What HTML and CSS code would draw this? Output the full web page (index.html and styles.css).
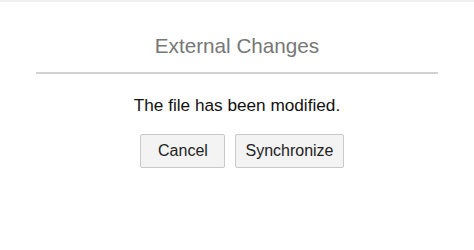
FILE: index.html
```html
<!DOCTYPE html>
<html lang="en">
<head>
    <meta charset="UTF-8">
    <title>External Changes</title>
    <link rel="stylesheet" href="styles.css">
</head>
<body>
    <div class="top-strip"></div>

    <div class="dialog">
        <h2 class="dialog-title">External Changes</h2>
        <div class="divider"></div>
        <p class="message">The file has been modified.</p>

        <!-- Actions -->
        <div class="actions">
            <button class="btn btn-cancel">Cancel</button>
            <button class="btn">Synchronize</button>
        </div>
    </div>
</body>
</html>
```

FILE: styles.css
```css
body {
    margin: 0;
    background-color: #fff;
    font-family: "Liberation Sans", Arial, sans-serif;
    color: #111;
}

.top-strip {
    height: 2px;
    background-color: #f0f0f0;
}

.dialog {
    padding: 32px 36px 0;
}

.dialog-title {
    margin: 0;
    font-size: 20.7px;
    font-weight: normal;
    line-height: 24px;
    color: #777;
    text-align: center;
}

.divider {
    height: 2px;
    margin-top: 14px;
    background-color: #d2d2d2;
}

.message {
    margin: 20px 0 0;
    font-size: 17.2px;
    line-height: 22px;
    text-align: center;
}

.actions {
    display: flex;
    justify-content: center;
    gap: 10px;
    margin-top: 18px;
    padding-left: 10px;
}

.btn {
    height: 34px;
    padding: 0 9px;
    border: 1px solid #c9c9c9;
    border-radius: 2px;
    background-color: #f3f3f3;
    font-family: "Liberation Sans", Arial, sans-serif;
    font-size: 16px;
    color: #222;
    cursor: pointer;
}

.btn-cancel {
    min-width: 85px;
}
```
